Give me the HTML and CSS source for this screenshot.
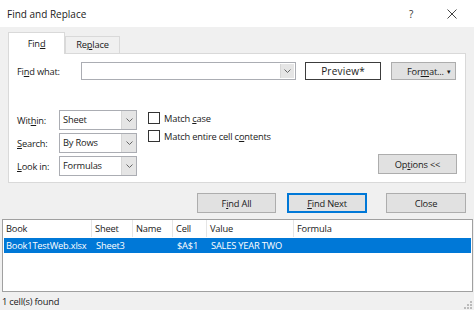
FILE: index.html
```html
<!DOCTYPE html>
<html lang="en">
<head>
  <meta charset="UTF-8" />
  <title>Find and Replace</title>
  <link rel="stylesheet" href="styles.css">
</head>
<body>
  <div class="titlebar">
    <span class="title">Find and Replace</span>
    <div class="controls">
      <span class="help">?</span>
      <span class="close">
        <svg width="10" height="10" viewBox="0 0 10 10">
          <path d="M0.5 0.5 L9.5 9.5 M9.5 0.5 L0.5 9.5" stroke="#444" stroke-width="1" fill="none" />
        </svg>
      </span>
    </div>
  </div>

  <div class="dialog">
    <div class="tabs">
      <div class="tab active">Fin<u>d</u></div>
      <div class="tab">Re<u>p</u>lace</div>
    </div>

    <div class="panel">
      <div class="find-row">
        <label class="find-label">Fi<u>n</u>d what:</label>
        <div class="combo wide">
          <span class="combo-text"></span>
          <span class="combo-btn">
            <svg width="7" height="4" viewBox="0 0 7 4"><path d="M0.5 0.5 L3.5 3.5 L6.5 0.5" stroke="#666" fill="none" /></svg>
          </span>
        </div>
        <div class="preview">Preview*</div>
        <button class="btn format"><span>For<u>m</u>at...</span><span class="caret">&#9662;</span></button>
      </div>

      <div class="options">
        <div class="selects">
          <div class="field">
            <label>Wit<u>h</u>in:</label>
            <div class="combo">
              <span class="combo-text">Sheet</span>
              <span class="combo-btn">
                <svg width="7" height="4" viewBox="0 0 7 4"><path d="M0.5 0.5 L3.5 3.5 L6.5 0.5" stroke="#666" fill="none" /></svg>
              </span>
            </div>
          </div>
          <div class="field">
            <label><u>S</u>earch:</label>
            <div class="combo">
              <span class="combo-text">By Rows</span>
              <span class="combo-btn">
                <svg width="7" height="4" viewBox="0 0 7 4"><path d="M0.5 0.5 L3.5 3.5 L6.5 0.5" stroke="#666" fill="none" /></svg>
              </span>
            </div>
          </div>
          <div class="field">
            <label><u>L</u>ook in:</label>
            <div class="combo">
              <span class="combo-text">Formulas</span>
              <span class="combo-btn">
                <svg width="7" height="4" viewBox="0 0 7 4"><path d="M0.5 0.5 L3.5 3.5 L6.5 0.5" stroke="#666" fill="none" /></svg>
              </span>
            </div>
          </div>
        </div>

        <div class="checks">
          <label class="check"><span class="box"></span><span>Match <u>c</u>ase</span></label>
          <label class="check"><span class="box"></span><span>Match entire cell c<u>o</u>ntents</span></label>
        </div>

        <button class="btn options-btn">Op<u>t</u>ions &lt;&lt;</button>
      </div>
    </div>

    <div class="actions">
      <button class="btn find-all">F<u>i</u>nd All</button>
      <button class="btn find-next"><u>F</u>ind Next</button>
      <button class="btn close-btn">Close</button>
    </div>
  </div>

  <div class="results">
    <div class="row head">
      <div class="cell">Book</div>
      <div class="cell">Sheet</div>
      <div class="cell">Name</div>
      <div class="cell">Cell</div>
      <div class="cell">Value</div>
      <div class="cell last">Formula</div>
    </div>
    <div class="row selected">
      <div class="cell">Book1TestWeb.xlsx</div>
      <div class="cell">Sheet3</div>
      <div class="cell"></div>
      <div class="cell">$A$1</div>
      <div class="cell">SALES YEAR TWO</div>
      <div class="cell last"></div>
    </div>
  </div>

  <div class="status">
    <span>1 cell(s) found</span>
    <svg class="grip" width="8" height="8" viewBox="0 0 8 8">
      <rect x="6" y="0" width="2" height="2" fill="#bbb" />
      <rect x="3" y="3" width="2" height="2" fill="#bbb" />
      <rect x="6" y="3" width="2" height="2" fill="#bbb" />
      <rect x="0" y="6" width="2" height="2" fill="#bbb" />
      <rect x="3" y="6" width="2" height="2" fill="#bbb" />
      <rect x="6" y="6" width="2" height="2" fill="#bbb" />
    </svg>
  </div>
</body>
</html>
```

FILE: styles.css
```css
body {
  margin: 0;
  width: 474px;
  height: 310px;
  overflow: hidden;
  background: #f0f0f0;
  color: #1a1a1a;
  font-family: 'Open Sans', 'Noto Sans', sans-serif;
  font-size: 9.3px;
  letter-spacing: -0.2px;
}

u {
  text-decoration-thickness: 1px;
  text-underline-offset: 1px;
}

button {
  font-family: inherit;
  font-size: inherit;
  letter-spacing: inherit;
  color: #1a1a1a;
}

/* title bar */
.titlebar {
  height: 27px;
  background: #fff;
  display: flex;
  align-items: center;
  justify-content: space-between;
  padding-left: 7px;
  box-sizing: border-box;
}

.title {
  font-size: 10px;
  letter-spacing: 0;
}

.controls {
  display: flex;
  align-items: center;
  height: 27px;
}

.help {
  width: 38px;
  text-align: left;
  font-size: 10px;
  color: #333;
}

.close {
  display: flex;
  align-items: center;
  width: 27px;
  height: 27px;
}

/* dialog body */
.dialog {
  padding: 5px 8px 0 8px;
}

.tabs {
  display: flex;
  align-items: flex-end;
  height: 21px;
}

.tab {
  box-sizing: border-box;
  height: 17px;
  width: 55px;
  border: 1px solid #d9d9d9;
  border-bottom: none;
  background: #f0f0f0;
  text-align: center;
  line-height: 15px;
}

.tab.active {
  height: 22px;
  width: 57px;
  background: #fff;
  margin-bottom: -1px;
  line-height: 22px;
  position: relative;
  z-index: 1;
}

.panel {
  box-sizing: border-box;
  height: 130px;
  background: #fff;
  border: 1px solid #d9d9d9;
  padding: 8px 8px 0 8px;
}

.find-row {
  display: flex;
  align-items: center;
  height: 18px;
}

.find-label {
  width: 64px;
}

.combo {
  box-sizing: border-box;
  display: flex;
  width: 78px;
  height: 20px;
  border: 1px solid #abadb3;
  background: #fff;
}

.combo.wide {
  width: 215px;
  height: 18px;
}

.combo-text {
  flex: 1;
  padding-left: 3px;
  line-height: 18px;
}

.combo-btn {
  width: 14px;
  background: #e5e5e5;
  border-left: 1px solid #d6d6d6;
  display: flex;
  align-items: center;
  justify-content: center;
}

.combo.wide .combo-btn {
  margin: 1px 1px 1px 0;
  width: 13px;
}

.preview {
  box-sizing: border-box;
  margin-left: 9px;
  width: 76px;
  height: 18px;
  border: 1px solid #3c3c3c;
  text-align: center;
  line-height: 16px;
  font-size: 10px;
  letter-spacing: 0.2px;
}

.btn {
  box-sizing: border-box;
  height: 20px;
  background: #e1e1e1;
  border: 1px solid #adadad;
  padding: 0;
  text-align: center;
}

.format {
  margin-left: 10px;
  width: 65px;
  height: 18px;
  padding: 0 4px 0 15px;
  display: flex;
  align-items: center;
  justify-content: space-between;
}

.caret {
  font-size: 7px;
}

.options {
  display: flex;
  margin-top: 30px;
}

.selects {
  display: flex;
  flex-direction: column;
  gap: 3px;
}

.field {
  display: flex;
  align-items: center;
}

.field label {
  width: 42px;
}

.checks {
  margin-left: 11px;
  padding-top: 2px;
  display: flex;
  flex-direction: column;
  gap: 6px;
}

.check {
  display: flex;
  align-items: center;
  height: 12px;
  gap: 4px;
}

.box {
  box-sizing: border-box;
  width: 12px;
  height: 12px;
  border: 1px solid #333;
  background: #fff;
}

.options-btn {
  margin-left: auto;
  align-self: flex-end;
  margin-bottom: 2px;
  width: 79px;
}

/* bottom buttons */
.actions {
  display: flex;
  justify-content: flex-end;
  margin-top: 10px;
}

.find-all {
  width: 79px;
  margin-right: 11px;
}

.find-next {
  width: 80px;
  margin-right: 19px;
  border: 2px solid #0078d7;
}

.close-btn {
  width: 80px;
}

/* results list */
.results {
  box-sizing: border-box;
  margin: 6px 1px 0 2px;
  height: 73px;
  background: #fff;
  border: 1px solid #a0a0a0;
}

.row {
  display: grid;
  grid-template-columns: 89px 41px 40px 34px 87px 1fr;
}

.row.head {
  height: 17px;
  line-height: 17px;
  margin-bottom: 1px;
}

.row.head .cell {
  border-right: 1px solid #e5e5e5;
}

.row.head .cell.last {
  border-right: none;
}

.cell {
  padding-left: 3px;
  white-space: nowrap;
  overflow: hidden;
}

.row.selected {
  margin: 0 1px;
  height: 15px;
  line-height: 15px;
  background: #0078d7;
  color: #fff;
}

.row.selected .cell:first-child {
  padding-left: 2px;
}

/* status bar */
.status {
  height: 18px;
  display: flex;
  align-items: center;
  justify-content: space-between;
  padding: 0 2px;
}

.grip {
  margin-top: 8px;
}
```
